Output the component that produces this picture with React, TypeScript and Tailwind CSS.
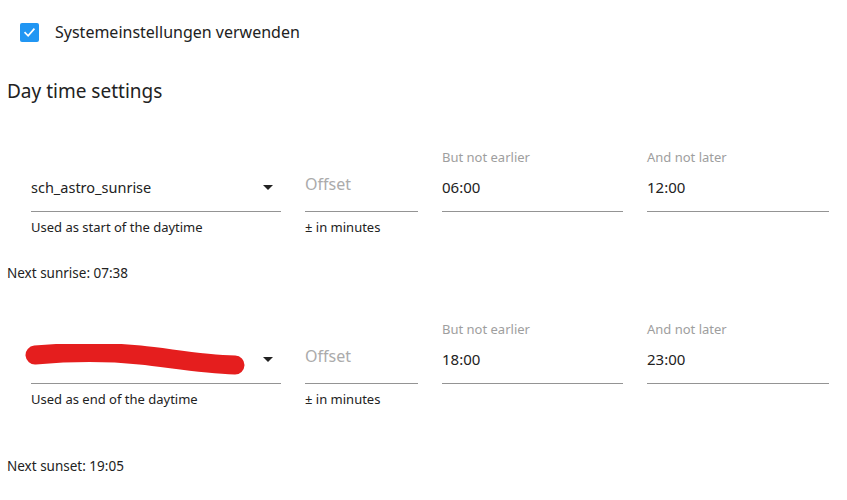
import React from "react";

const font = { fontFamily: '"Noto Sans", "Open Sans", sans-serif' };

function Caret() {
  return (
    <svg width="10" height="5" viewBox="0 0 10 5" className="shrink-0">
      <path d="M0 0 L10 0 L5 5 Z" fill="#222" />
    </svg>
  );
}

// red marker stroke that hides the selected value
function Scribble() {
  return (
    <svg width="224" height="36" viewBox="0 0 224 36" className="block -ml-[6px] mt-[4px]">
      <path
        d="M10 11 C 45 8, 85 8, 115 11 S 175 20, 210 21"
        stroke="#e51e1e"
        strokeWidth="19"
        strokeLinecap="round"
        fill="none"
      />
    </svg>
  );
}

function TimeField({ label, value }: { label: string; value: string }) {
  return (
    <div className="flex flex-col">
      <div className="h-[20px] text-[13px] leading-[18px] text-[#9e9e9e]">{label}</div>
      <div className="h-[44px] flex items-center pb-[4px] border-b border-[#949494] text-[15px] text-[#222]">
        {value}
      </div>
    </div>
  );
}

function Row({
  select,
  helper,
  from,
  to,
}: {
  select?: string;
  helper: string;
  from: string;
  to: string;
}) {
  return (
    <div className="grid grid-cols-[250px_113px_181px_182px] gap-x-[24px] pl-[24px]">
      <div className="flex flex-col">
        <div className="h-[20px]" />
        <div className="h-[44px] flex items-center justify-between pb-[4px] pr-[8px] border-b border-[#949494] text-[14.5px] text-[#222]">
          {select ? <span>{select}</span> : <Scribble />}
          <Caret />
        </div>
        <div className="mt-[7px] text-[13px] leading-[16px] text-[#222]">{helper}</div>
      </div>
      <div className="flex flex-col">
        <div className="h-[20px]" />
        <div className="h-[44px] flex items-center pb-[12px] border-b border-[#949494] text-[16px] text-[#ababab]">
          Offset
        </div>
        <div className="mt-[7px] text-[13px] leading-[16px] text-[#222]">± in minutes</div>
      </div>
      <TimeField label="But not earlier" value={from} />
      <TimeField label="And not later" value={to} />
    </div>
  );
}

export default function App() {
  return (
    <div className="w-[847px] h-[500px] bg-white px-[7px] overflow-hidden" style={font}>
      <label className="flex items-center pl-[13px] pt-[22px] h-[42px]">
        <span className="w-[19px] h-[19px] rounded-[2px] bg-[#2196f3] flex items-center justify-center">
          <svg width="13" height="13" viewBox="0 0 24 24">
            <path d="M4 12.5 L9.5 18 L20 6" stroke="white" strokeWidth="3.2" fill="none" strokeLinecap="square" />
          </svg>
        </span>
        <span className="ml-[16px] text-[16px] text-[#222]">Systemeinstellungen verwenden</span>
      </label>

      <h2 className="mt-[37px] text-[19px] leading-[24px] text-[#222]">Day time settings</h2>

      <div className="mt-[45px]">
        <Row select="sch_astro_sunrise" helper="Used as start of the daytime" from="06:00" to="12:00" />
      </div>
      <div className="mt-[30px] text-[13.5px] leading-[16px] text-[#222]">Next sunrise: 07:38</div>

      <div className="mt-[39px]">
        <Row helper="Used as end of the daytime" from="18:00" to="23:00" />
      </div>
      <div className="mt-[51px] text-[13.5px] leading-[16px] text-[#222]">Next sunset: 19:05</div>
    </div>
  );
}
